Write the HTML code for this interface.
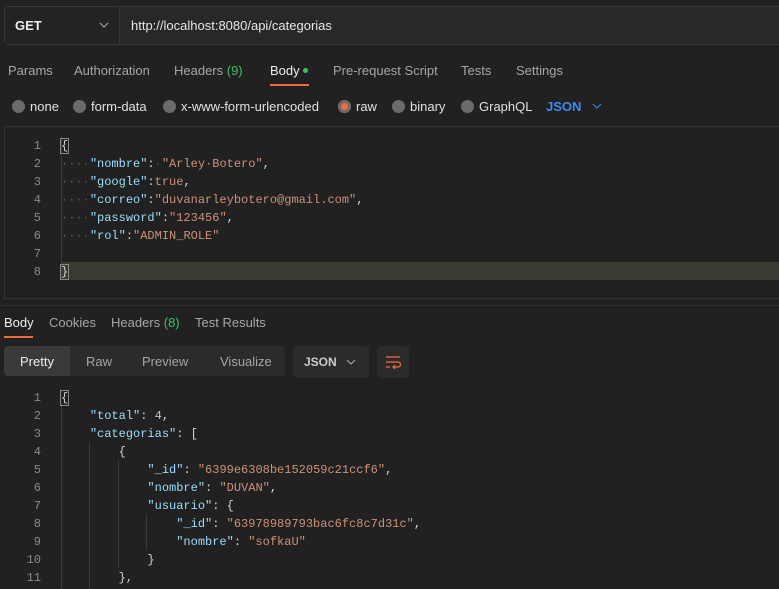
<!DOCTYPE html>
<html><head><meta charset="utf-8"><style>
*{margin:0;padding:0;box-sizing:border-box}
body{width:779px;height:589px;background:#212121;font-family:"Liberation Sans",Arial,sans-serif;color:#e0e0e0;position:relative;overflow:hidden;font-size:13px}
.abs{position:absolute;white-space:nowrap}
.box{position:absolute;left:4px;top:6px;width:780px;height:39px;border:1px solid #363636;border-radius:4px;background:#282828}
.get{position:absolute;left:0;top:0;width:115px;height:37px;border-right:1px solid #363636;background:#232323}
.tab{color:#a6a6a6}
.g{color:#3fbf62}
.dot{display:inline-block;width:13px;height:13px;border-radius:50%;background:#6b6b6b;vertical-align:-2px;margin-right:5px}
.code{font-family:"Liberation Mono",monospace;font-size:12px}
.ln{position:absolute;width:40px;text-align:right;color:#8a8a8a;font-family:"Liberation Mono",monospace;font-size:12px}
.k{color:#9cdcfe}.s{color:#ce9178}.p{color:#d4d4d4}.n{color:#b5cea8}.dt{color:#555}
</style></head><body>
<div class="box"><div class="get"></div></div>
<div class="abs" style="left:15px;top:18px;font-weight:bold;font-size:13px;color:#eee">GET</div>
<svg class="abs" style="left:99px;top:22px" width="10" height="6"><path d="M1 1L5 5L9 1" stroke="#aaa" fill="none"/></svg>
<div class="abs" style="left:131px;top:18px;color:#e6e6e6">http://localhost:8080/api/categorias</div>

<div class="abs tab" style="left:8px;top:63px">Params</div>
<div class="abs tab" style="left:74px;top:63px">Authorization</div>
<div class="abs tab" style="left:174px;top:63px">Headers <span class="g">(9)</span></div>
<div class="abs" style="left:270px;top:63px;color:#eee">Body <span style="display:inline-block;width:5px;height:5px;border-radius:50%;background:#3fbf62;vertical-align:2px"></span></div>
<div class="abs" style="left:270px;top:84px;width:39px;height:2px;background:#f26b3a"></div>
<div class="abs tab" style="left:333px;top:63px">Pre-request Script</div>
<div class="abs tab" style="left:461px;top:63px">Tests</div>
<div class="abs tab" style="left:516px;top:63px">Settings</div>

<div class="abs" style="left:12px;top:99px"><span class="dot"></span>none</div>
<div class="abs" style="left:73px;top:99px"><span class="dot"></span>form-data</div>
<div class="abs" style="left:163px;top:99px"><span class="dot"></span>x-www-form-urlencoded</div>
<div class="abs" style="left:338px;top:99px"><span class="dot" style="background:#f26b3a;box-shadow:inset 0 0 0 3px #6b6b6b"></span>raw</div>
<div class="abs" style="left:392px;top:99px"><span class="dot"></span>binary</div>
<div class="abs" style="left:461px;top:99px"><span class="dot"></span>GraphQL</div>
<div class="abs" style="left:546px;top:99px;color:#3b8bf0;font-weight:bold">JSON</div>
<svg class="abs" style="left:592px;top:103px" width="10" height="6"><path d="M1 1L5 5L9 1" stroke="#3b8bf0" fill="none"/></svg>

<div class="abs" style="left:4px;top:126px;width:780px;height:173px;border:1px solid #333;border-right:none"></div>
<div class="abs" style="left:62px;top:262px;width:717px;height:18px;background:#3a3a30"></div>
<div class="abs" style="left:61px;top:136px;width:1px;height:144px;background:#3a3a3a"></div>
<div class="ln" style="left:1px;top:137px;line-height:18px">1<br>2<br>3<br>4<br>5<br>6<br>7<br>8</div>
<div class="abs code" style="left:61px;top:137px;line-height:18px"><span class="p" style="outline:1px solid #888">{</span><br><span class="dt">····</span><span class="k">"nombre"</span><span class="p">:</span><span class="dt">·</span><span class="s">"Arley·Botero"</span><span class="p">,</span><br><span class="dt">····</span><span class="k">"google"</span><span class="p">:</span><span class="s">true</span><span class="p">,</span><br><span class="dt">····</span><span class="k">"correo"</span><span class="p">:</span><span class="s">"duvanarleybotero@gmail.com"</span><span class="p">,</span><br><span class="dt">····</span><span class="k">"password"</span><span class="p">:</span><span class="s">"123456"</span><span class="p">,</span><br><span class="dt">····</span><span class="k">"rol"</span><span class="p">:</span><span class="s">"ADMIN_ROLE"</span><br><br><span class="p" style="outline:1px solid #888">}</span></div>

<div class="abs" style="left:0;top:305px;width:779px;height:1px;background:#303030"></div>
<div class="abs" style="left:4px;top:315px;color:#eee">Body</div>
<div class="abs" style="left:4px;top:336px;width:29px;height:2px;background:#f26b3a"></div>
<div class="abs tab" style="left:49px;top:315px">Cookies</div>
<div class="abs tab" style="left:111px;top:315px">Headers <span class="g">(8)</span></div>
<div class="abs tab" style="left:195px;top:315px">Test Results</div>

<div class="abs" style="left:4px;top:346px;width:281px;height:30px;background:#2b2b2b;border-radius:4px"></div>
<div class="abs" style="left:4px;top:346px;width:66px;height:30px;background:#3a3a3a;border-radius:4px 0 0 4px"></div>
<div class="abs" style="left:20px;top:354px;color:#eee">Pretty</div>
<div class="abs tab" style="left:86px;top:354px">Raw</div>
<div class="abs tab" style="left:142px;top:354px">Preview</div>
<div class="abs tab" style="left:220px;top:354px">Visualize</div>
<div class="abs" style="left:293px;top:346px;width:76px;height:32px;background:#2b2b2b;border-radius:4px"></div>
<div class="abs" style="left:304px;top:355px;color:#ccc;font-weight:bold;font-size:12px">JSON</div>
<svg class="abs" style="left:346px;top:359px" width="10" height="6"><path d="M1 1L5 5L9 1" stroke="#aaa" fill="none"/></svg>
<div class="abs" style="left:377px;top:346px;width:32px;height:32px;background:#2b2b2b;border-radius:4px"></div>
<svg class="abs" style="left:385px;top:355px" width="16" height="14"><path d="M1 2H15M1 7H13a2.5 2.5 0 0 1 0 5H8M10 10L8 12L10 14M1 12H5" stroke="#f26b3a" fill="none" stroke-width="1.2"/></svg>

<div class="abs" style="left:61px;top:404px;width:1px;height:185px;background:#3a3a3a"></div>
<div class="abs" style="left:89px;top:442px;width:1px;height:147px;background:#3a3a3a"></div>
<div class="abs" style="left:118px;top:460px;width:1px;height:108px;background:#3a3a3a"></div>
<div class="abs" style="left:146px;top:514px;width:1px;height:36px;background:#3a3a3a"></div>
<div class="ln" style="left:1px;top:389px;line-height:18px">1<br>2<br>3<br>4<br>5<br>6<br>7<br>8<br>9<br>10<br>11</div>
<div class="abs code" style="left:61px;top:389px;line-height:18px;white-space:pre"><span class="p" style="outline:1px solid #888">{</span>
    <span class="k">"total"</span><span class="p">: </span><span class="n">4</span><span class="p">,</span>
    <span class="k">"categorias"</span><span class="p">: [</span>
        <span class="p">{</span>
            <span class="k">"_id"</span><span class="p">: </span><span class="s">"6399e6308be152059c21ccf6"</span><span class="p">,</span>
            <span class="k">"nombre"</span><span class="p">: </span><span class="s">"DUVAN"</span><span class="p">,</span>
            <span class="k">"usuario"</span><span class="p">: {</span>
                <span class="k">"_id"</span><span class="p">: </span><span class="s">"63978989793bac6fc8c7d31c"</span><span class="p">,</span>
                <span class="k">"nombre"</span><span class="p">: </span><span class="s">"sofkaU"</span>
            <span class="p">}</span>
        <span class="p">},</span></div>
</body></html>
